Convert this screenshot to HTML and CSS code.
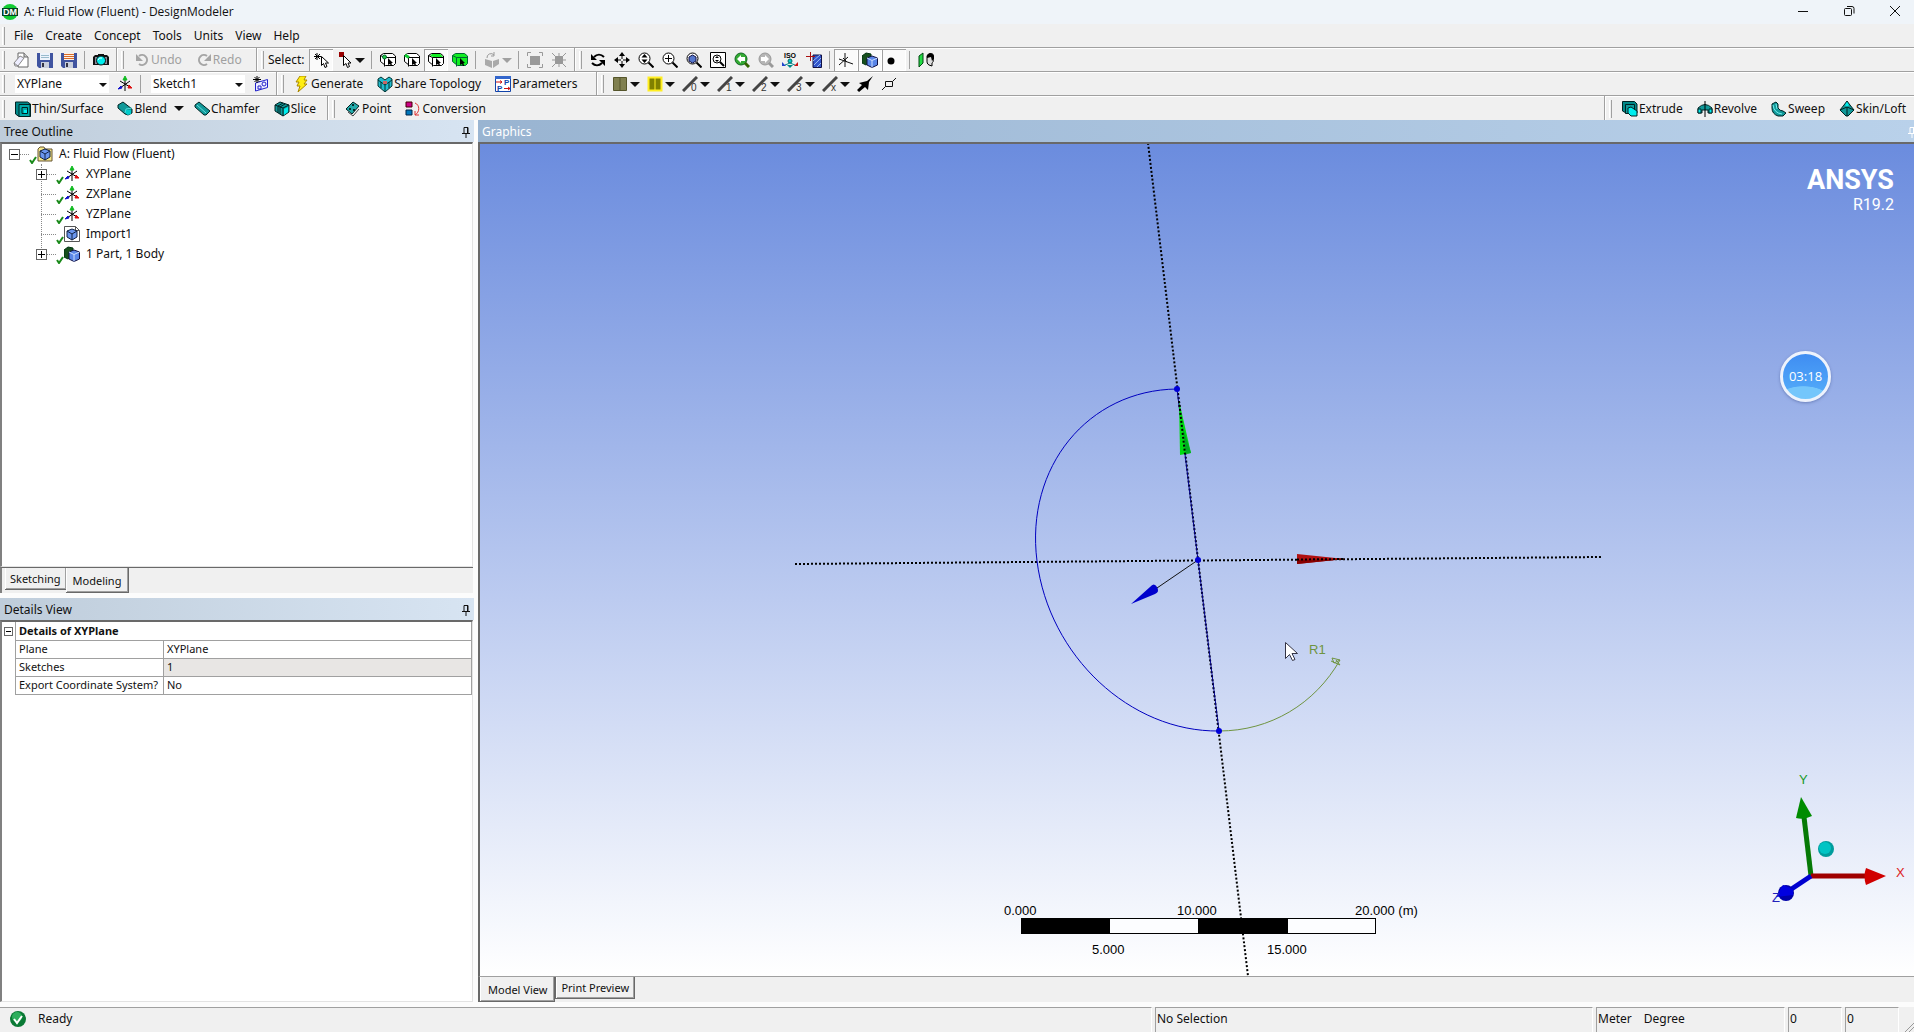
FILE: index.html
```html
<!DOCTYPE html>
<html lang="en">
<head>
  <meta charset="UTF-8">
  <meta name="viewport" content="width=device-width, initial-scale=1.0">
  <title>A: Fluid Flow (Fluent) - DesignModeler</title>
  <link rel="stylesheet" href="styles.css">
</head>
<body>
  <!-- Icon sprite -->
  <svg class="sprite" aria-hidden="true">
    <symbol id="new" viewBox="0 0 16 16"><path d="M5 1h6l4 4v10H5z" fill="#fff" stroke="#666"/><path d="M11 1v4h4" fill="#ccc" stroke="#666"/><path d="M1 11l6-7 4 2-6 8H2z" fill="#eef" stroke="#888"/><path d="M1 11l4 3" stroke="#888"/></symbol>
    <symbol id="save" viewBox="0 0 16 16"><path d="M0 1h16v15H2l-2-2z" fill="#4054a0"/><path d="M3 1h10v7H3z" fill="#eef3fb"/><path d="M4 3.500h8M4 5.500h8" stroke="#9bc" /><path d="M4 10h8v6H4z" fill="#c9cfdd"/><path d="M5 11h2v4H5z" fill="#334"/></symbol>
    <symbol id="saveas" viewBox="0 0 16 16"><path d="M0 1h16v15H2l-2-2z" fill="#4054a0"/><path d="M3 1h10v7H3z" fill="#fff1e4"/><path d="M3 2.500h10M3 4.500h10M3 6.500h10" stroke="#d96b28"/><path d="M4 10h8v6H4z" fill="#c9cfdd"/><path d="M5 11h2v4H5z" fill="#334"/></symbol>
    <symbol id="camera" viewBox="0 0 16 16"><path d="M0 5l2-2h3V2h6v1h3l2 2v8H0z" fill="#111"/><path d="M2 5h2v7H2zM12 5h2v7h-2z" fill="#889"/><circle cx="8" cy="8.500" r="4.500" fill="#0ee" stroke="#111"/><path d="M5 8q1-3 4-2" stroke="#fff" fill="none"/></symbol>
    <symbol id="undo" viewBox="0 0 16 16"><path d="M5 4a5 5 0 1 1 0 8" fill="none" stroke="#a5a5a5" stroke-width="2"/><path d="M2 2v7h7z" fill="#a5a5a5"/></symbol>
    <symbol id="redo" viewBox="0 0 16 16"><path d="M11 4a5 5 0 1 0 0 8" fill="none" stroke="#a5a5a5" stroke-width="2"/><path d="M15 2v7H8z" fill="#a5a5a5"/></symbol>
    <symbol id="pick" viewBox="0 0 16 16"><path d="M4 1v7M1 4.500h7M2 2l5 5M7 2L2 7" stroke="#000"/><path d="M8.500 4.500v9l2-2 1.500 4 2-1-1.500-3.500h3z" fill="#fff" stroke="#000"/></symbol>
    <symbol id="pickmode" viewBox="0 0 16 16"><path d="M2 0h5v5H2z" fill="#900"/><path d="M6.500 3.500v10l2.500-2 1.500 4 2-1L11 11h3z" fill="#fff" stroke="#000"/></symbol>
    <symbol id="box" viewBox="0 0 16 16"><path d="M.5 3.500l3-2h9l3 2.500v7.500l-2 2h-8l-5-4z" fill="#fff" stroke="#000"/><path d="M.5 3.500l4 2h11M4.500 5.500v9" fill="none" stroke="#000"/></symbol>
    <symbol id="cur" viewBox="0 0 16 16"><path d="M8 6v7l2-1 1 2h1l-.5-3H13z" fill="#000"/></symbol>
    <symbol id="selpoint" viewBox="0 0 16 16"><use href="#box"/><circle cx="4.500" cy="5" r="2" fill="#2c4" stroke="#063"/><use href="#cur"/></symbol>
    <symbol id="seledge" viewBox="0 0 16 16"><use href="#box"/><path d="M1 3l4 2.500" stroke="#1c3" stroke-width="3"/><use href="#cur"/></symbol>
    <symbol id="selface" viewBox="0 0 16 16"><use href="#box"/><path d="M2 3.500l2-1.500h8.500L15 5H5z" fill="#1e2"/><use href="#cur"/></symbol>
    <symbol id="selbody" viewBox="0 0 16 16"><path d="M.5 3.500l3-2h9l3 2.500v7.500l-2 2h-8l-5-4z" fill="#1e2" stroke="#063"/><path d="M.5 3.500l4 2h11M4.500 5.500v9" fill="none" stroke="#063"/><use href="#cur"/></symbol>
    <symbol id="ghostbox" viewBox="0 0 16 16"><path d="M1 7l7 2v7l-7-3zM9 9l6-2v5l-6 4z" fill="#aaa"/><path d="M3 6a4 4 0 0 1 7-3M10 0v4H7" fill="none" stroke="#999"/></symbol>
    <symbol id="extend" viewBox="0 0 16 16"><path d="M3 4h10v9H3z" fill="#999"/><path d="M.5 4V.5H4M12 .5h3.500V4M.5 12v3.500H4M12 15.500h3.500V12" fill="none" stroke="#999"/></symbol>
    <symbol id="shrink" viewBox="0 0 16 16"><path d="M4 4h8v8H4z" fill="#999"/><path d="M1 1l3 3M15 1l-3 3M1 15l3-3M15 15l-3-3M8 1v14M1 8h14" stroke="#999"/></symbol>
    <symbol id="rotate" viewBox="0 0 16 16"><path d="M4 5c3-3 7-3 10 0M12 11c-3 3-7 3-10 0" fill="none" stroke="#000" stroke-width="2"/><path d="M1 2v6h6zM15 14V8H9z"/></symbol>
    <symbol id="pan" viewBox="0 0 16 16"><path d="M8 2v12M2 8h12" stroke="#000" stroke-dasharray="5 2"/><path d="M8 0l3 4H5zM8 16l3-4H5zM0 8l4-3v6zM16 8l-4-3v6z"/></symbol>
    <symbol id="lens" viewBox="0 0 16 16"><circle cx="6.500" cy="6.500" r="5.500" fill="#fff" stroke="#000"/><path d="M10.500 10.500l5 5" stroke="#000" stroke-width="2"/></symbol>
    <symbol id="zoom" viewBox="0 0 16 16"><use href="#lens"/><path d="M6.500 2l3 3.500h-6zM6.500 11l3-3.500h-6z"/></symbol>
    <symbol id="boxzoom" viewBox="0 0 16 16"><use href="#lens"/><path d="M6.500 3v7M3 6.500h7" stroke="#000"/></symbol>
    <symbol id="fit" viewBox="0 0 16 16"><use href="#lens"/><path d="M3 5l3.500-2L10 5v4l-3.500 2L3 9z" fill="#57c" stroke="#114"/></symbol>
    <symbol id="magnify" viewBox="0 0 16 16"><path d="M.5.5h15v15H.5z" fill="#fff" stroke="#000"/><circle cx="7" cy="7" r="4" fill="none" stroke="#000"/><path d="M10 10l4 4" stroke="#000" stroke-width="2"/><path d="M7 4l2 2H5zM7 10l2-2H5z"/></symbol>
    <symbol id="prev" viewBox="0 0 16 16"><circle cx="7" cy="7" r="6" fill="#3a3" stroke="#162"/><path d="M11 11l4 4" stroke="#360" stroke-width="3"/><path d="M3 7l4-4v2h4v4H7v2z" fill="#fff"/></symbol>
    <symbol id="next" viewBox="0 0 16 16"><circle cx="7" cy="7" r="6" fill="#b5b5b5" stroke="#999"/><path d="M11 11l4 4" stroke="#999" stroke-width="3"/><path d="M11 7L7 3v2H3v4h4v2z" fill="#fff"/></symbol>
    <symbol id="triad" viewBox="0 0 16 16"><path d="M8 8v3l-5 2M8 11l5 2" fill="none" stroke="#088"/><circle cx="8" cy="9" r="2" fill="#0cc" stroke="#066"/><path d="M4 14H0v-4z" fill="#24c"/><path d="M5 13h6l-3 3z" fill="#088"/><path d="M12 14h4v-4z" fill="#c11"/></symbol>
    <symbol id="lookat" viewBox="0 0 16 16"><path d="M7 3h8.500v12.500H7z" fill="#35c" stroke="#114"/><path d="M7 9l7-6M8 13l7-7M11 15l4-4" stroke="#9be"/><path d="M4.500 0v9M0 4.500h9" stroke="#a11"/></symbol>
    <symbol id="axes" viewBox="0 0 16 16"><path d="M7 1v14M1 13l9-8M1 7l14 5M5 6l4 4" stroke="#111"/></symbol>
    <symbol id="bodies" viewBox="0 0 16 16"><path d="M0 4l4-3 5 1v8l-5 3-4-2z" fill="#174f1c" stroke="#031"/><path d="M5 6l5-2 5.500 2v7L10 15.500 5 13z" fill="#5a86e8" stroke="#114"/><path d="M5 6l5 2.500L15.500 6M10 8.500v7" fill="none" stroke="#cdf"/></symbol>
    <symbol id="dot" viewBox="0 0 16 16"><circle cx="5" cy="9" r="3.500"/></symbol>
    <symbol id="face" viewBox="0 0 16 16"><path d="M1 4l4-3v10l-4 4z" fill="#2d4" stroke="#041"/><path d="M9 4c2-4 7-3 7 1s-1 5-2 6v3l-3-1c-2-1-2-3-2-4z" fill="#ddd" stroke="#000"/><path d="M9 3c4-3 8-1 7 4l-2 2-1-4-4 1z"/></symbol>
    <symbol id="plane" viewBox="0 0 16 16"><path d="M8 4v11M3 12l10-7M3 5l10 6" stroke="#000"/><path d="M8 0l2 4H6z" fill="#1b2" stroke="#1b2"/><path d="M1 13l3-3 1 2z" fill="#11c" stroke="#11c"/><path d="M15 12l-3-3-1 3z" fill="#d11" stroke="#d11"/></symbol>
    <symbol id="sketch" viewBox="0 0 16 16"><path d="M2.500 7l12-3.500v8l-12 3.500zM5 10h3v3H5z" fill="#eef" stroke="#22c"/><circle cx="11" cy="8" r="2" fill="none" stroke="#22c"/><path d="M4 0v7M0 3.500h8M1.500 1l5 5M6.500 1l-5 5" stroke="#000"/></symbol>
    <symbol id="bolt" viewBox="0 0 16 16"><path d="M6 0h6l-2 4h3l-3 4h3L4 16l2-6H3l2-4H2z" fill="#fe1" stroke="#a80"/></symbol>
    <symbol id="share" viewBox="0 0 16 16"><path d="M1 3l3-2 4 3 4-3 3 2v7l-7 6-7-6z" fill="#2bc" stroke="#033"/><path d="M1 4l7 5 7-5M8 9v6M4 6v6M12 6v6" fill="none" stroke="#033"/><path d="M6 5h4v3H6z" fill="#c66"/></symbol>
    <symbol id="params" viewBox="0 0 16 16"><path d="M.5.5h15v15H.5z" fill="#fff" stroke="#14a"/><path d="M0 0h16v3H0z" fill="#36c"/><path d="M1 6h6M9 12.500h6M5 4.500l2 1.500-2 1.500M13 11l2 1.500-2 1.500" fill="none" stroke="#c11"/></symbol>
    <symbol id="panes" viewBox="0 0 16 16"><path d="M1.500 1.500h13v13h-13z" fill="#7f7f4f" stroke="#55552a"/><path d="M8 1v14" stroke="#55552a"/></symbol>
    <symbol id="panes2" viewBox="0 0 16 16"><path d="M1.500 1.500h13v13h-13z" fill="#808000" stroke="#fe2" stroke-width="2"/><path d="M8 1v14" stroke="#fe2"/></symbol>
    <symbol id="edge" viewBox="0 0 16 16"><path d="M1 15L15 1" stroke="#444" stroke-width="3"/></symbol>
    <symbol id="thickedge" viewBox="0 0 16 16"><path d="M0 14l5-5-3-2 8-2 6-5-4 6-1 8-3-3-6 5z"/></symbol>
    <symbol id="vertex" viewBox="0 0 16 16"><path d="M4.500 5.500h7v5h-7zM1 14l3.500-3.500M11.500 5.500L15 2" fill="none" stroke="#111"/></symbol>
    <symbol id="thin" viewBox="0 0 16 16"><path d="M.5 1h12L15.500 3v12.500H4L.5 13z" fill="#088" stroke="#022"/><path d="M4 3.500h11v12H4zM7 6.500h5.500v6H7z" fill="#0aa" stroke="#022"/><path d="M9 9h3v3H9z" fill="#0ee"/></symbol>
    <symbol id="blend" viewBox="0 0 16 16"><path d="M1 4l5-3 9 7v4l-4 2-3-1-7-6z" fill="#199" stroke="#022"/><path d="M8 12l1-4 6-1" fill="none" stroke="#5dd"/><path d="M9 9h5v4l-3 1-2-1z" fill="#0cc"/></symbol>
    <symbol id="chamfer" viewBox="0 0 16 16"><path d="M1 4l4-3 11 9-4 4h-2L1 6z" fill="#199" stroke="#022"/><path d="M3 4l9 8" stroke="#6dd"/></symbol>
    <symbol id="slice" viewBox="0 0 16 16"><path d="M1 4l5-3 9 3v7l-6 4-8-5z" fill="#199" stroke="#022"/><path d="M1 4l8 3 6-3M9 7v8M4 5l5-3M6 6l5-3M4 5v7M6 6v7" fill="none" stroke="#022"/><path d="M10 8l4-2v5l-4 3z" fill="#0ee"/></symbol>
    <symbol id="point" viewBox="0 0 16 16"><path d="M1 8l7-7 6 4-7 8z" fill="#2aa" stroke="#022"/><path d="M3 11l5 4 6-7" fill="none" stroke="#444"/><circle cx="8" cy="4" r="1"/><circle cx="5" cy="8" r="1"/><circle cx="9" cy="9" r="1"/></symbol>
    <symbol id="conv" viewBox="0 0 16 16"><path d="M1 1h6v5H1z" fill="#c08" stroke="#400"/><path d="M1 9h6v5H1z" fill="#07b" stroke="#024"/><path d="M10 2c5 2 5 9 0 12M10 10v4h4" fill="none" stroke="#d33"/></symbol>
    <symbol id="extrude" viewBox="0 0 16 16"><path d="M.5.5h12L15 3v9H4l-3.500-2z" fill="#088" stroke="#022"/><path d="M3.500 3.500h9v9h-9z" fill="#199" stroke="#022"/><path d="M6 7l3-1 6 4v5H9l-3-3z" fill="#0ee" stroke="#022"/></symbol>
    <symbol id="revolve" viewBox="0 0 16 16"><path d="M1 7q7-7 14 0v5h-4V9H5v3H1z" fill="#199" stroke="#022"/><path d="M1 8h3v4H1zM12 8h3v4h-3z" fill="#0ee" stroke="#022"/><path d="M8 0v16" stroke="#000"/></symbol>
    <symbol id="sweep" viewBox="0 0 16 16"><path d="M1 3l4-2 2 2v4q2 3 5 3l3 2-3 3H7q-6-2-6-8z" fill="#199" stroke="#022"/><path d="M2 4q1 8 9 9M5 3l1 5" fill="none" stroke="#7ee"/></symbol>
    <symbol id="skin" viewBox="0 0 16 16"><path d="M8 0l3 4 4 5-6 6H7L1 9l4-5z" fill="#199" stroke="#022"/><path d="M8 1l2 3-2 2-2-2z" fill="#0ee"/><path d="M8 6v9M1 9l7-3 7 3" fill="none" stroke="#022"/></symbol>
    <symbol id="cube" viewBox="0 0 16 16"><path d="M3 5l5-2 5 2v6l-5 3-5-3z" fill="#6a96ee" stroke="#124"/><path d="M3 5l5 3 5-3M8 8v6" fill="none" stroke="#124"/></symbol>
    <symbol id="project" viewBox="0 0 16 16"><path d="M1 3l2-2h4l1 2h7v12H1z" fill="#f6e88a" stroke="#653"/><use href="#cube"/></symbol>
    <symbol id="import" viewBox="0 0 16 16"><path d="M.5.5h11l4 4v11H.5z" fill="#fff" stroke="#555"/><path d="M11.500.5v4h4" fill="none" stroke="#555"/><use href="#cube"/></symbol>
    <symbol id="check" viewBox="0 0 8 8"><path d="M1 4l2 3 4-6" fill="none" stroke="#1a8a1a" stroke-width="2"/></symbol>
    <symbol id="pin" viewBox="0 0 8 12"><path d="M2 1.500h4v6H2zM5.500 1v6M0 7.500h8M4 7v5" fill="none" stroke="currentColor"/></symbol>
  </svg>

  <header class="titlebar">
    <svg class="app-icon" viewBox="0 0 16 16"><circle cx="8" cy="8" r="8" fill="#1c3"/><path d="M0 4h16v8H0z" fill="#042"/><text x="8" y="11" text-anchor="middle" class="dm-text">DM</text></svg>
    <h1>A: Fluid Flow (Fluent) - DesignModeler</h1>
    <div class="window-buttons">
      <button aria-label="Minimize"><svg viewBox="0 0 12 12"><path d="M1 6.500h10"/></svg></button>
      <button aria-label="Restore"><svg viewBox="0 0 12 12"><rect x="1.500" y="3.500" width="7" height="7" rx="1"/><path d="M4 1.500h5q2 0 2 2v5"/></svg></button>
      <button aria-label="Close"><svg viewBox="0 0 12 12"><path d="M1 1l10 10M11 1L1 11"/></svg></button>
    </div>
  </header>

  <nav class="toolbar menubar">
    <span class="grip"></span>
    <button>File</button><button>Create</button><button>Concept</button><button>Tools</button><button>Units</button><button>View</button><button>Help</button>
  </nav>

  <div class="toolbar">
    <div class="band">
      <span class="grip"></span>
      <button class="tool" aria-label="New"><svg><use href="#new"/></svg></button>
      <button class="tool" aria-label="Save"><svg><use href="#save"/></svg></button>
      <button class="tool" aria-label="Save as"><svg><use href="#saveas"/></svg></button>
      <span class="sep"></span>
      <button class="tool" aria-label="Capture"><svg><use href="#camera"/></svg></button>
    </div>
    <div class="band band-undo">
      <span class="grip"></span>
      <button class="tool labeled" disabled><svg><use href="#undo"/></svg>Undo</button>
      <button class="tool labeled" disabled><svg><use href="#redo"/></svg>Redo</button>
    </div>
    <div class="band">
      <span class="grip"></span>
      <span class="band-label">Select:</span>
      <button class="tool pressed" aria-label="New selection"><svg><use href="#pick"/></svg></button>
      <button class="tool split" aria-label="Select mode"><svg><use href="#pickmode"/></svg><i class="caret"></i></button>
      <span class="sep"></span>
      <button class="tool" aria-label="Points"><svg><use href="#selpoint"/></svg></button>
      <button class="tool" aria-label="Edges"><svg><use href="#seledge"/></svg></button>
      <button class="tool pressed" aria-label="Faces"><svg><use href="#selface"/></svg></button>
      <button class="tool" aria-label="Bodies"><svg><use href="#selbody"/></svg></button>
      <span class="sep"></span>
      <button class="tool split" aria-label="Extend selection" disabled><svg><use href="#ghostbox"/></svg><i class="caret"></i></button>
      <span class="sep"></span>
      <button class="tool" aria-label="Expand" disabled><svg><use href="#extend"/></svg></button>
      <button class="tool" aria-label="Shrink" disabled><svg><use href="#shrink"/></svg></button>
    </div>
    <div class="band last">
      <span class="grip"></span>
      <button class="tool" aria-label="Rotate"><svg><use href="#rotate"/></svg></button>
      <button class="tool" aria-label="Pan"><svg><use href="#pan"/></svg></button>
      <button class="tool" aria-label="Zoom"><svg><use href="#zoom"/></svg></button>
      <button class="tool" aria-label="Box zoom"><svg><use href="#boxzoom"/></svg></button>
      <button class="tool" aria-label="Zoom to fit"><svg><use href="#fit"/></svg></button>
      <button class="tool" aria-label="Magnifier"><svg><use href="#magnify"/></svg></button>
      <button class="tool" aria-label="Previous view"><svg><use href="#prev"/></svg></button>
      <button class="tool" aria-label="Next view" disabled><svg><use href="#next"/></svg></button>
      <button class="tool" aria-label="Isometric"><svg viewBox="0 0 16 16"><text x="8" y="6" text-anchor="middle" class="iso-text">ISO</text><use href="#triad"/></svg></button>
      <button class="tool" aria-label="Look at"><svg><use href="#lookat"/></svg></button>
      <span class="sep"></span>
      <button class="tool pressed" aria-label="Display plane"><svg><use href="#axes"/></svg></button>
      <button class="tool pressed" aria-label="Display model"><svg><use href="#bodies"/></svg></button>
      <button class="tool pressed" aria-label="Display points"><svg><use href="#dot"/></svg></button>
      <span class="sep"></span>
      <button class="tool" aria-label="Look at face"><svg><use href="#face"/></svg></button>
    </div>
  </div>

  <div class="toolbar">
    <div class="band">
      <span class="grip"></span>
      <span class="combo"><select aria-label="Plane"><option>XYPlane</option><option>ZXPlane</option><option>YZPlane</option></select></span>
      <button class="tool" aria-label="New plane"><svg><use href="#plane"/></svg></button>
      <span class="sep"></span>
      <span class="combo"><select aria-label="Sketch"><option>Sketch1</option></select></span>
      <button class="tool" aria-label="New sketch"><svg><use href="#sketch"/></svg></button>
    </div>
    <div class="band band-generate">
      <span class="grip"></span>
      <button class="tool labeled"><svg><use href="#bolt"/></svg>Generate</button>
      <button class="tool labeled"><svg><use href="#share"/></svg>Share Topology</button>
      <button class="tool labeled"><svg viewBox="0 0 16 16"><use href="#params"/><text x="9" y="9" class="p-text">P</text><text x="2" y="15" class="p-text">P</text></svg>Parameters</button>
    </div>
    <div class="band last">
      <span class="grip"></span>
      <button class="tool split" aria-label="Face color"><svg><use href="#panes"/></svg><i class="caret"></i></button>
      <button class="tool split" aria-label="Edge color"><svg><use href="#panes2"/></svg><i class="caret"></i></button>
      <button class="tool split" aria-label="Edges with 0 faces"><svg viewBox="0 0 16 16"><use href="#edge"/><text x="9" y="15" class="edge-text">0</text></svg><i class="caret"></i></button>
      <button class="tool split" aria-label="Edges with 1 face"><svg viewBox="0 0 16 16"><use href="#edge"/><text x="9" y="15" class="edge-text">1</text></svg><i class="caret"></i></button>
      <button class="tool split" aria-label="Edges with 2 faces"><svg viewBox="0 0 16 16"><use href="#edge"/><text x="9" y="15" class="edge-text">2</text></svg><i class="caret"></i></button>
      <button class="tool split" aria-label="Edges with 3 faces"><svg viewBox="0 0 16 16"><use href="#edge"/><text x="9" y="15" class="edge-text">3</text></svg><i class="caret"></i></button>
      <button class="tool split" aria-label="Edges with many faces"><svg viewBox="0 0 16 16"><use href="#edge"/><text x="9" y="15" class="edge-text">x</text></svg><i class="caret"></i></button>
      <button class="tool" aria-label="Thick edges"><svg><use href="#thickedge"/></svg></button>
      <button class="tool" aria-label="Show vertices"><svg><use href="#vertex"/></svg></button>
    </div>
  </div>

  <div class="toolbar toolbar-bottom">
    <div class="band">
      <span class="grip"></span>
      <button class="tool labeled"><svg><use href="#thin"/></svg>Thin/Surface</button>
      <button class="tool labeled"><svg><use href="#blend"/></svg>Blend<i class="caret"></i></button>
      <button class="tool labeled"><svg><use href="#chamfer"/></svg>Chamfer</button>
      <button class="tool labeled"><svg><use href="#slice"/></svg>Slice</button>
    </div>
    <div class="band band-fill">
      <span class="grip"></span>
      <button class="tool labeled"><svg><use href="#point"/></svg>Point</button>
      <button class="tool labeled"><svg><use href="#conv"/></svg>Conversion</button>
    </div>
    <div class="band last">
      <span class="grip"></span>
      <button class="tool labeled"><svg><use href="#extrude"/></svg>Extrude</button>
      <button class="tool labeled"><svg><use href="#revolve"/></svg>Revolve</button>
      <button class="tool labeled"><svg><use href="#sweep"/></svg>Sweep</button>
      <button class="tool labeled"><svg><use href="#skin"/></svg>Skin/Loft</button>
    </div>
  </div>

  <main class="workspace">
    <aside class="side">
      <section class="panel tree-panel">
        <h2 class="panel-title">Tree Outline<svg class="pin"><use href="#pin"/></svg></h2>
        <div class="panel-body">
          <ul class="tree">
            <li>
              <div class="node"><button class="toggle minus" aria-label="Collapse"></button><span class="dots"></span><svg class="check"><use href="#check"/></svg><svg class="icon"><use href="#project"/></svg>A: Fluid Flow (Fluent)</div>
              <ul>
                <li><div class="node"><button class="toggle plus" aria-label="Expand"></button><span class="dots"></span><svg class="check"><use href="#check"/></svg><svg class="icon"><use href="#plane"/></svg>XYPlane</div></li>
                <li><div class="node leaf"><span class="dots"></span><svg class="check"><use href="#check"/></svg><svg class="icon"><use href="#plane"/></svg>ZXPlane</div></li>
                <li><div class="node leaf"><span class="dots"></span><svg class="check"><use href="#check"/></svg><svg class="icon"><use href="#plane"/></svg>YZPlane</div></li>
                <li><div class="node leaf"><span class="dots"></span><svg class="check"><use href="#check"/></svg><svg class="icon"><use href="#import"/></svg>Import1</div></li>
                <li><div class="node"><button class="toggle plus" aria-label="Expand"></button><span class="dots"></span><svg class="check"><use href="#check"/></svg><svg class="icon"><use href="#bodies"/></svg>1 Part, 1 Body</div></li>
              </ul>
            </li>
          </ul>
        </div>
        <div class="tabs side-tabs">
          <button class="tab">Sketching</button><button class="tab active">Modeling</button>
        </div>
      </section>

      <section class="panel details-panel">
        <h2 class="panel-title">Details View<svg class="pin"><use href="#pin"/></svg></h2>
        <div class="panel-body details">
          <button class="toggle small minus" aria-label="Collapse"></button>
          <table>
            <colgroup><col class="name-col"><col></colgroup>
            <thead><tr><th colspan="2">Details of XYPlane</th></tr></thead>
            <tbody>
              <tr><td>Plane</td><td>XYPlane</td></tr>
              <tr><td>Sketches</td><td class="readonly">1</td></tr>
              <tr><td>Export Coordinate System?</td><td>No</td></tr>
            </tbody>
          </table>
        </div>
      </section>
    </aside>

    <section class="panel graphics">
      <h2 class="panel-title">Graphics<svg class="pin"><use href="#pin"/></svg></h2>
      <div class="viewport">
        <svg class="scene" viewBox="480 145 1434 832" preserveAspectRatio="xMidYMid slice">
          <!-- sketch plane axes -->
          <g class="axis-lines">
            <path d="M1148 144L1248 977"/>
            <path d="M795 565L1601 558"/>
          </g>
          <path d="M1177 390L1219 732" stroke="#00008c"/>
          <path d="M1198 561L1157 589" stroke="#111"/>
          <path d="M1179 402L1180 456L1191 454Z" fill="#0d1"/>
          <path d="M1182 425L1186 455L1191 454Z" fill="#0a2"/>
          <path d="M1297 555L1345 560L1297 565Z" fill="#b01010"/>
          <path d="M1297 561L1345 560L1297 565Z" fill="#800"/>
          <path d="M1131 605L1150 588Q1154 583 1157 588Q1160 593 1155 595Z" fill="#00c"/>
          <path class="axis-lines" d="M1179 402L1185 455M1297 560.500L1345 560"/>
          <!-- arc and its radius dimension -->
          <path d="M1177 390C1088 391 1025 468 1037 562C1049 657 1130 733 1219 732" fill="none" stroke="#0000c0"/>
          <path d="M1219 732C1270 732 1315 705 1340 661M1340 661L1332 659L1334 664ZM1331 662L1340 666L1336 661" fill="none" stroke="#6f9440"/>
          <g fill="#0000d8"><circle cx="1177" cy="390" r="3"/><circle cx="1198" cy="561" r="3"/><circle cx="1219" cy="732" r="3"/></g>
          <text x="1309" y="655" fill="#6f9440">R1</text>
          <path d="M1285.500 643.500v16l4-4 3 6 2.500-1-3-6h5.500z" fill="#fff" stroke="#334"/>
          <!-- scale bar -->
          <rect x="1021.500" y="919.500" width="354" height="15" fill="#fcfdff" stroke="#000"/>
          <path d="M1021 919h89v16h-89zM1198 919h90v16h-90z"/>
          <g fill="#000">
            <text x="1004" y="916">0.000</text><text x="1177" y="916">10.000</text><text x="1355" y="916">20.000 (m)</text>
            <text x="1092" y="955">5.000</text><text x="1267" y="955">15.000</text>
          </g>
          <!-- orientation triad -->
          <path d="M1811 877L1804 818" stroke="#067a06" stroke-width="5"/>
          <path d="M1801 798L1796 819Q1804 821 1812 817Z" fill="#008c00"/>
          <path d="M1811 877H1866" stroke="#a00000" stroke-width="5"/>
          <path d="M1866 869L1886 877L1866 886Q1863 877 1866 869Z" fill="#d00000"/>
          <path d="M1811 877L1790 891" stroke="#0000d0" stroke-width="5"/>
          <circle cx="1786" cy="894" r="8" fill="#0000a8"/>
          <path d="M1776 898L1783 886L1793 890L1793 896Z" fill="#0000e0"/>
          <circle cx="1826" cy="850" r="8" fill="#009c9c"/><circle cx="1825" cy="849" r="6" fill="#00c4c4"/>
          <text x="1799" y="785" fill="#1a9a2a">Y</text><text x="1896" y="878" fill="#d22">X</text><text x="1772" y="903" fill="#22b">Z</text>
        </svg>
        <div class="brand"><strong>ANSYS</strong><span>R19.2</span></div>
        <div class="timer">03:18</div>
      </div>
      <div class="tabs view-tabs">
        <button class="tab active">Model View</button><button class="tab">Print Preview</button>
      </div>
    </section>
  </main>

  <footer class="statusbar">
    <div class="cell ready"><svg viewBox="0 0 16 16"><circle cx="8" cy="8" r="8" fill="#0a7a35"/><circle cx="7" cy="6" r="5" fill="#2eae5c"/><path d="M4 8l3 4 5-7" fill="none" stroke="#fff" stroke-width="2"/></svg>Ready</div>
    <div class="cell selection">No Selection</div>
    <div class="cell units"><span>Meter</span><span>Degree</span></div>
    <div class="cell num">0</div>
    <div class="cell num">0</div>
    <svg class="resize" viewBox="0 0 12 14"><path d="M3 14l9-9M7 14l5-5" stroke="#999"/></svg>
  </footer>
</body>
</html>
```

FILE: styles.css
```css
* {
  box-sizing: border-box;
}
body {
  margin: 0;
  height: 100vh;
  display: flex;
  flex-direction: column;
  overflow: hidden;
  background: #fcfcfc;
  color: #111;
  font-family: "Noto Sans", "Open Sans", sans-serif;
  font-size: 12px;
  line-height: 16px;
}
button, select {
  font: inherit;
  color: inherit;
  border: none;
  background: none;
  padding: 0;
  margin: 0;
}
h1, h2 {
  margin: 0;
  font-size: 12px;
  font-weight: normal;
}
ul {
  list-style: none;
  margin: 0;
  padding: 0;
}
.sprite {
  position: absolute;
  width: 0;
  height: 0;
}
.iso-text {
  font: bold 7px "Liberation Sans", sans-serif;
}
.p-text {
  font: bold 8px "Liberation Sans", sans-serif;
  fill: #14a;
}
.dm-text {
  font: bold 9px "Liberation Sans", sans-serif;
  fill: #fff;
}
.edge-text {
  font: 10px "Liberation Sans", sans-serif;
  fill: #333;
}

/* Title bar */
.titlebar {
  display: flex;
  align-items: center;
  height: 24px;
  padding-left: 2px;
  background: #eff4f9;
}
.titlebar h1 {
  font-family: "Open Sans", sans-serif;
}
.app-icon {
  width: 16px;
  height: 16px;
  margin-right: 6px;
}
.window-buttons {
  display: flex;
  margin: 0 -4px 0 auto;
  padding-bottom: 4px;
}
.window-buttons button {
  width: 46px;
  height: 20px;
}
.window-buttons svg {
  width: 12px;
  height: 12px;
  fill: none;
  stroke: #111;
  vertical-align: middle;
}

/* Toolbars */
.toolbar {
  display: flex;
  height: 24px;
  background: #f0f0f0;
  border-bottom: 1px solid #a0a0a0;
  box-shadow: inset 0 1px #fff;
}
.toolbar-bottom {
  border-bottom: none;
}
.menubar {
  box-shadow: none;
  align-items: center;
  padding-left: 2px;
}
.menubar button {
  padding: 0 6px 0 5px;
}
.menubar button + button {
  padding-left: 6px;
}
.grip {
  width: 3px;
  height: 18px;
  margin-right: 4px;
  border-left: 1px solid #fff;
  border-right: 1px solid #a0a0a0;
}
.band {
  display: flex;
  align-items: center;
  padding: 1px 3px 0 4px;
  border-right: 1px solid #a0a0a0;
  box-shadow: 1px 0 #fff;
}
.band:first-child {
  padding-left: 2px;
}
.band.last {
  padding-right: 0;
  border-right: none;
  box-shadow: none;
}
.band-undo {
  width: 140px;
}
.band-generate {
  width: 320px;
}
.band-fill {
  flex: 1;
}
.band-label {
  width: 41px;
}
.sep {
  width: 1px;
  height: 18px;
  margin: 0 4px 0 3px;
  background: #a0a0a0;
}
.tool {
  display: flex;
  align-items: center;
  height: 22px;
  padding: 0 4px;
  white-space: nowrap;
}
.tool svg {
  width: 16px;
  height: 16px;
}
.tool.labeled {
  padding: 0 8px 0 6px;
  gap: 1px;
}
.tool.pressed {
  background: #fafafa;
  box-shadow: inset 1px 1px #a0a0a0, inset -1px -1px #fff;
}
.tool:disabled {
  color: #a0a0a0;
}
.caret {
  margin-left: 2px;
  border: 5px solid transparent;
  border-top-color: currentColor;
  border-bottom: none;
}
.labeled .caret {
  margin: 0 -4px 0 6px;
}
.split {
  padding-right: 3px;
}
.combo {
  position: relative;
  margin: 0 4px 0 6px;
}
.combo select {
  appearance: none;
  display: block;
  width: 94px;
  height: 18px;
  padding: 0 20px 0 2px;
  background: #fff;
}
.combo::after {
  content: "";
  position: absolute;
  right: 2px;
  top: 8px;
  border: 4px solid transparent;
  border-top-color: #111;
  border-bottom: none;
  pointer-events: none;
}

/* Panels */
.workspace {
  flex: 1;
  display: flex;
  gap: 4px;
  min-height: 0;
}
.side {
  width: 474px;
  display: flex;
  flex-direction: column;
  gap: 5px;
}
.panel {
  display: flex;
  flex-direction: column;
  min-height: 0;
}
.tree-panel {
  flex: 473 1 0;
}
.details-panel {
  flex: 404 1 0;
}
.panel-title {
  display: flex;
  align-items: center;
  justify-content: space-between;
  height: 22px;
  padding: 1px 4px 0 4px;
  background: linear-gradient(90deg, #bfcddb, #d7e4f2);
}
.pin {
  width: 8px;
  height: 12px;
}
.panel-body {
  flex: 1;
  background: #fff;
  border: 1px solid #e3e3e3;
  border-top: 2px solid #696969;
  border-left: 2px solid #808080;
  margin-right: 1px;
}

/* Tree */
.tree {
  padding: 0 0 0 7px;
}
.tree ul {
  position: relative;
  padding-left: 27px;
}
.tree ul::before {
  content: "";
  position: absolute;
  left: 32px;
  top: 0;
  bottom: 10px;
  border-left: 1px dotted #888;
}
.node {
  display: flex;
  align-items: center;
  height: 20px;
}
.node .icon {
  width: 16px;
  height: 16px;
  margin-right: 6px;
}
.check {
  width: 8px;
  height: 8px;
  align-self: flex-end;
}
.dots {
  width: 9px;
  border-top: 1px dotted #888;
}
.leaf .dots {
  width: 15px;
  margin-left: 5px;
}
.toggle {
  position: relative;
  width: 11px;
  height: 11px;
  border: 1px solid #666;
  background: linear-gradient(#000, #000) center / 7px 1px no-repeat #fff;
}
.toggle.plus {
  background: linear-gradient(#000, #000) center / 7px 1px no-repeat, linear-gradient(#000, #000) center / 1px 7px no-repeat #fff;
}
.toggle.small {
  width: 9px;
  height: 9px;
  background-size: 5px 1px;
}

/* Tabs */
.tabs {
  display: flex;
  align-items: flex-start;
  height: 26px;
  background: #f0f0f0;
  font-size: 11px;
}
.tab {
  height: 22px;
  padding: 0 5px;
  border: 1px solid #696969;
  border-top: none;
  box-shadow: inset 1px 0 #fff, inset -1px -1px #a0a0a0;
}
.tab.active {
  height: 25px;
}
.side-tabs {
  padding-left: 3px;
  margin-right: 1px;
  border-top: 1px solid #696969;
  border-left: 2px solid #808080;
}
.side-tabs .tab {
  border-left: none;
}
.side-tabs .tab:first-child {
  border-right: none;
}
.side-tabs .active {
  padding: 2px 7px 0 7px;
}
.view-tabs {
  border-top: 1px solid #a0a0a0;
  border-left: 2px solid #696969;
}
.view-tabs .active {
  padding: 2px 7px 0 8px;
  border-left: none;
}

/* Details */
.details {
  display: flex;
  align-items: flex-start;
  font-size: 11px;
}
.details .toggle {
  margin: 5px 2px 0 2px;
}
.details table {
  flex: 1;
  border-collapse: collapse;
  table-layout: fixed;
}
.details th, .details td {
  height: 18px;
  padding: 0 3px;
  border: 1px solid #a0a0a0;
  text-align: left;
  white-space: nowrap;
}
.details th {
  border-top: none;
}
.name-col {
  width: 148px;
}
.readonly {
  background: #e8e6e4;
}

/* Graphics */
.graphics {
  flex: 1;
  min-width: 0;
}
.graphics .panel-title {
  padding-right: 0;
  background: linear-gradient(90deg, #99b4d1, #b9d1ea);
  color: #fff;
}
.graphics .pin {
  margin-right: -2px;
}
.viewport {
  position: relative;
  flex: 1;
  min-height: 0;
  border-top: 2px solid #696969;
  border-left: 2px solid #696969;
  background: linear-gradient(#6b8cde, #ffffff);
}
.scene {
  display: block;
  width: 100%;
  height: 100%;
}
.scene text {
  font: 13px "Liberation Sans", Arial, sans-serif;
}
.axis-lines {
  fill: none;
  stroke: #000;
  stroke-width: 2;
  stroke-dasharray: 2 2;
}
.brand {
  position: absolute;
  top: 20px;
  right: 20px;
  display: flex;
  flex-direction: column;
  align-items: flex-end;
  color: #fff;
  font-family: Roboto, sans-serif;
}
.brand strong {
  font-size: 27px;
  line-height: 32px;
}
.brand span {
  font-size: 16px;
  line-height: 18px;
}
.timer {
  position: absolute;
  top: 207px;
  right: 83px;
  width: 51px;
  height: 51px;
  border: 3px solid #eef3fc;
  border-radius: 50%;
  background: radial-gradient(30px 17px at 45% 108%, #74c6fb 94%, transparent 98%), linear-gradient(#3f8df2, #55aefa);
  box-shadow: 0 1px 3px rgba(60, 80, 140, 0.5);
  color: #fff;
  font-family: "Open Sans", sans-serif;
  font-size: 13px;
  line-height: 45px;
  text-align: center;
}

/* Status bar */
.statusbar {
  display: flex;
  gap: 3px;
  height: 25px;
  margin-top: 5px;
  background: #f0f0f0;
}
.cell {
  display: flex;
  align-items: center;
  padding: 0 1px 2px 1px;
  border-top: 1px solid #a0a0a0;
  border-left: 1px solid #a0a0a0;
  border-right: 1px solid #fff;
}
.ready {
  flex: 1;
  padding-left: 10px;
  border-left: none;
}
.ready svg {
  width: 16px;
  height: 16px;
  margin-right: 12px;
}
.selection {
  width: 438px;
}
.units {
  width: 189px;
  gap: 12px;
}
.num {
  width: 54px;
}
.resize {
  width: 12px;
  height: 14px;
  align-self: flex-end;
}
```
